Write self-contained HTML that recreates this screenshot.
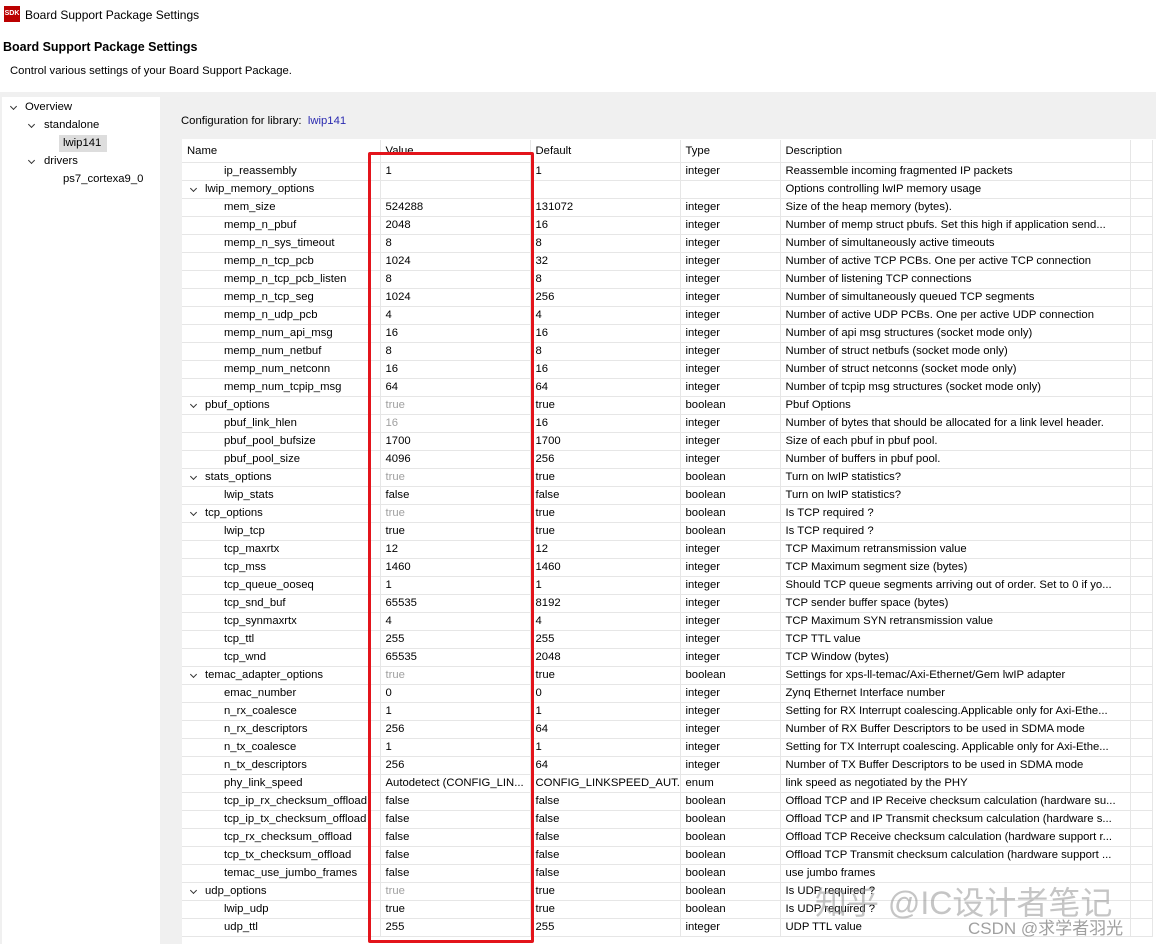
<!DOCTYPE html>
<html><head><meta charset="utf-8"><style>
body{margin:0;width:1156px;height:944px;overflow:hidden;background:#fff;font-family:"Liberation Sans","Noto Sans CJK SC",sans-serif;font-size:11.3px;color:#000;position:relative}
.a{position:absolute}
table{position:absolute;left:182px;top:140px;border-collapse:collapse;table-layout:fixed;width:971px}
td,th{height:17px;padding:0 0 0 5px;border-bottom:1px solid #e6e6e6;border-right:1px solid #e6e6e6;white-space:nowrap;overflow:hidden;font-weight:normal;text-align:left;line-height:17px;box-sizing:content-box}
th{height:22px;line-height:22px}
td.n{padding-left:42px}
td.g{padding-left:23px;position:relative}
.c{position:absolute;width:4px;height:4px;border-right:1px solid #333;border-bottom:1px solid #333;transform:rotate(45deg)}
td.g .c{left:9px;top:5px}
.gr{color:#a0a0a0}
</style></head><body>
<div class="a" style="left:4px;top:6px;width:16px;height:16px;background:#b00;color:#fff;font-size:7px;font-weight:bold;line-height:16px;text-align:center">SDK</div>
<div class="a" style="left:25px;top:8px;font-size:12px">Board Support Package Settings</div>
<div class="a" style="left:3px;top:40px;font-size:12.5px;font-weight:bold">Board Support Package Settings</div>
<div class="a" style="left:10px;top:65px">Control various settings of your Board Support Package.</div>
<div class="a" style="left:0;top:92px;width:1156px;height:852px;background:#f0f0f0"></div>
<div class="a" style="left:2px;top:97px;width:158px;height:847px;background:#fff"></div>
<div class="c" style="left:11px;top:104px"></div><div class="a" style="left:25px;top:101px">Overview</div>
<div class="c" style="left:29px;top:122px"></div><div class="a" style="left:44px;top:119px">standalone</div>
<div class="a" style="left:59px;top:135px;width:48px;height:17px;background:#ddd"></div>
<div class="a" style="left:63px;top:137px">lwip141</div>
<div class="c" style="left:29px;top:158px"></div><div class="a" style="left:44px;top:155px">drivers</div>
<div class="a" style="left:63px;top:173px">ps7_cortexa9_0</div>
<div class="a" style="left:181px;top:115px">Configuration for library:&nbsp; <span style="color:#2a2ab0">lwip141</span></div>
<div class="a" style="left:182px;top:139px;width:974px;height:805px;background:#fff"></div>
<table>
<colgroup><col style="width:198px"><col style="width:150px"><col style="width:150px"><col style="width:100px"><col style="width:350px"><col></colgroup>
<tr><th>Name</th><th>Value</th><th>Default</th><th>Type</th><th>Description</th><th></th></tr>
<tr><td class="n">ip_reassembly</td><td>1</td><td>1</td><td>integer</td><td>Reassemble incoming fragmented IP packets</td><td></td></tr>
<tr><td class="g"><i class="c"></i>lwip_memory_options</td><td></td><td></td><td></td><td>Options controlling lwIP memory usage</td><td></td></tr>
<tr><td class="n">mem_size</td><td>524288</td><td>131072</td><td>integer</td><td>Size of the heap memory (bytes).</td><td></td></tr>
<tr><td class="n">memp_n_pbuf</td><td>2048</td><td>16</td><td>integer</td><td>Number of memp struct pbufs. Set this high if application send...</td><td></td></tr>
<tr><td class="n">memp_n_sys_timeout</td><td>8</td><td>8</td><td>integer</td><td>Number of simultaneously active timeouts</td><td></td></tr>
<tr><td class="n">memp_n_tcp_pcb</td><td>1024</td><td>32</td><td>integer</td><td>Number of active TCP PCBs. One per active TCP connection</td><td></td></tr>
<tr><td class="n">memp_n_tcp_pcb_listen</td><td>8</td><td>8</td><td>integer</td><td>Number of listening TCP connections</td><td></td></tr>
<tr><td class="n">memp_n_tcp_seg</td><td>1024</td><td>256</td><td>integer</td><td>Number of simultaneously queued TCP segments</td><td></td></tr>
<tr><td class="n">memp_n_udp_pcb</td><td>4</td><td>4</td><td>integer</td><td>Number of active UDP PCBs. One per active UDP connection</td><td></td></tr>
<tr><td class="n">memp_num_api_msg</td><td>16</td><td>16</td><td>integer</td><td>Number of api msg structures (socket mode only)</td><td></td></tr>
<tr><td class="n">memp_num_netbuf</td><td>8</td><td>8</td><td>integer</td><td>Number of struct netbufs (socket mode only)</td><td></td></tr>
<tr><td class="n">memp_num_netconn</td><td>16</td><td>16</td><td>integer</td><td>Number of struct netconns (socket mode only)</td><td></td></tr>
<tr><td class="n">memp_num_tcpip_msg</td><td>64</td><td>64</td><td>integer</td><td>Number of tcpip msg structures (socket mode only)</td><td></td></tr>
<tr><td class="g"><i class="c"></i>pbuf_options</td><td class="gr">true</td><td>true</td><td>boolean</td><td>Pbuf Options</td><td></td></tr>
<tr><td class="n">pbuf_link_hlen</td><td class="gr">16</td><td>16</td><td>integer</td><td>Number of bytes that should be allocated for a link level header.</td><td></td></tr>
<tr><td class="n">pbuf_pool_bufsize</td><td>1700</td><td>1700</td><td>integer</td><td>Size of each pbuf in pbuf pool.</td><td></td></tr>
<tr><td class="n">pbuf_pool_size</td><td>4096</td><td>256</td><td>integer</td><td>Number of buffers in pbuf pool.</td><td></td></tr>
<tr><td class="g"><i class="c"></i>stats_options</td><td class="gr">true</td><td>true</td><td>boolean</td><td>Turn on lwIP statistics?</td><td></td></tr>
<tr><td class="n">lwip_stats</td><td>false</td><td>false</td><td>boolean</td><td>Turn on lwIP statistics?</td><td></td></tr>
<tr><td class="g"><i class="c"></i>tcp_options</td><td class="gr">true</td><td>true</td><td>boolean</td><td>Is TCP required ?</td><td></td></tr>
<tr><td class="n">lwip_tcp</td><td>true</td><td>true</td><td>boolean</td><td>Is TCP required ?</td><td></td></tr>
<tr><td class="n">tcp_maxrtx</td><td>12</td><td>12</td><td>integer</td><td>TCP Maximum retransmission value</td><td></td></tr>
<tr><td class="n">tcp_mss</td><td>1460</td><td>1460</td><td>integer</td><td>TCP Maximum segment size (bytes)</td><td></td></tr>
<tr><td class="n">tcp_queue_ooseq</td><td>1</td><td>1</td><td>integer</td><td>Should TCP queue segments arriving out of order. Set to 0 if yo...</td><td></td></tr>
<tr><td class="n">tcp_snd_buf</td><td>65535</td><td>8192</td><td>integer</td><td>TCP sender buffer space (bytes)</td><td></td></tr>
<tr><td class="n">tcp_synmaxrtx</td><td>4</td><td>4</td><td>integer</td><td>TCP Maximum SYN retransmission value</td><td></td></tr>
<tr><td class="n">tcp_ttl</td><td>255</td><td>255</td><td>integer</td><td>TCP TTL value</td><td></td></tr>
<tr><td class="n">tcp_wnd</td><td>65535</td><td>2048</td><td>integer</td><td>TCP Window (bytes)</td><td></td></tr>
<tr><td class="g"><i class="c"></i>temac_adapter_options</td><td class="gr">true</td><td>true</td><td>boolean</td><td>Settings for xps-ll-temac/Axi-Ethernet/Gem lwIP adapter</td><td></td></tr>
<tr><td class="n">emac_number</td><td>0</td><td>0</td><td>integer</td><td>Zynq Ethernet Interface number</td><td></td></tr>
<tr><td class="n">n_rx_coalesce</td><td>1</td><td>1</td><td>integer</td><td>Setting for RX Interrupt coalescing.Applicable only for Axi-Ethe...</td><td></td></tr>
<tr><td class="n">n_rx_descriptors</td><td>256</td><td>64</td><td>integer</td><td>Number of RX Buffer Descriptors to be used in SDMA mode</td><td></td></tr>
<tr><td class="n">n_tx_coalesce</td><td>1</td><td>1</td><td>integer</td><td>Setting for TX Interrupt coalescing. Applicable only for Axi-Ethe...</td><td></td></tr>
<tr><td class="n">n_tx_descriptors</td><td>256</td><td>64</td><td>integer</td><td>Number of TX Buffer Descriptors to be used in SDMA mode</td><td></td></tr>
<tr><td class="n">phy_link_speed</td><td>Autodetect (CONFIG_LIN...</td><td>CONFIG_LINKSPEED_AUT...</td><td>enum</td><td>link speed as negotiated by the PHY</td><td></td></tr>
<tr><td class="n">tcp_ip_rx_checksum_offload</td><td>false</td><td>false</td><td>boolean</td><td>Offload TCP and IP Receive checksum calculation (hardware su...</td><td></td></tr>
<tr><td class="n">tcp_ip_tx_checksum_offload</td><td>false</td><td>false</td><td>boolean</td><td>Offload TCP and IP Transmit checksum calculation (hardware s...</td><td></td></tr>
<tr><td class="n">tcp_rx_checksum_offload</td><td>false</td><td>false</td><td>boolean</td><td>Offload TCP Receive checksum calculation (hardware support r...</td><td></td></tr>
<tr><td class="n">tcp_tx_checksum_offload</td><td>false</td><td>false</td><td>boolean</td><td>Offload TCP Transmit checksum calculation (hardware support ...</td><td></td></tr>
<tr><td class="n">temac_use_jumbo_frames</td><td>false</td><td>false</td><td>boolean</td><td>use jumbo frames</td><td></td></tr>
<tr><td class="g"><i class="c"></i>udp_options</td><td class="gr">true</td><td>true</td><td>boolean</td><td>Is UDP required ?</td><td></td></tr>
<tr><td class="n">lwip_udp</td><td>true</td><td>true</td><td>boolean</td><td>Is UDP required ?</td><td></td></tr>
<tr><td class="n">udp_ttl</td><td>255</td><td>255</td><td>integer</td><td>UDP TTL value</td><td></td></tr>
</table>
<div class="a" style="left:368px;top:152px;width:160px;height:785px;border:3px solid #e3141b;border-radius:2px"></div>
<div class="a" style="left:815px;top:878px;font-size:32px;color:rgba(150,150,150,0.55)">知乎 @IC设计者笔记</div>
<div class="a" style="left:968px;top:914px;font-size:17px;color:rgba(120,120,120,0.7)">CSDN @求学者羽光</div>
</body></html>
